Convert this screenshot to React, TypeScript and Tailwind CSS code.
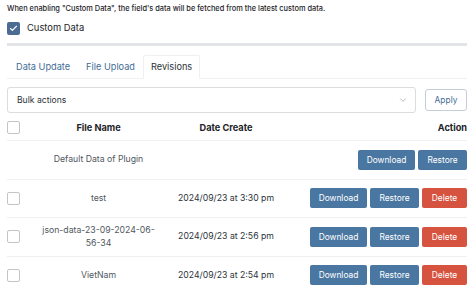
import { Check, ChevronDown } from 'lucide-react';

const rows = [
  { name: 'Default Data of Plugin', date: '', check: false, del: false },
  { name: 'test', date: '2024/09/23 at 3:30 pm', check: true, del: true },
  { name: 'json-data-23-09-2024-06-56-34', date: '2024/09/23 at 2:56 pm', check: true, del: true },
  { name: 'VietNam', date: '2024/09/23 at 2:54 pm', check: true, del: true },
];

function Box() {
  return <div className="w-[13px] h-[13px] rounded-[2px] border border-[#c3c4c7] bg-white" />;
}

export default function App() {
  return (
    <div className="w-[474px] h-[294px] overflow-hidden bg-white px-[7px] text-[#1d2327] font-['Inter',sans-serif]">
      {/* Custom data toggle */}
      <p className="pt-[4px] text-[7.4px] leading-[10px] font-medium text-[#1d2327]">
        When enabling "Custom Data", the field's data will be fetched from the latest custom data.
      </p>
      <label className="mt-[7px] flex items-center gap-[7px]">
        <span className="w-[13px] h-[13px] rounded-[2px] bg-[#4b6d93] flex items-center justify-center">
          <Check className="w-[9px] h-[9px] text-white" strokeWidth={3} />
        </span>
        <span className="text-[9.4px] text-[#1d2327]">Custom Data</span>
      </label>
      <div className="mt-[8px] h-[3px] bg-[#e2e4e7]" />

      {/* Tabs */}
      <div className="mt-[9px] flex items-end border-b border-[#eef0f2] pl-[1px]">
        <div className="px-[8px] h-[23px] flex items-center text-[9.2px] text-[#3f6c96]">Data Update</div>
        <div className="px-[8px] h-[23px] flex items-center text-[9.2px] text-[#3f6c96]">File Upload</div>
        <div className="px-[7px] h-[24px] -mb-px flex items-center text-[9.2px] text-[#2c3338] border border-b-white border-[#eef0f2] bg-white rounded-t-[2px]">
          Revisions
        </div>
      </div>

      {/* Bulk actions */}
      <div className="mt-[8px] flex items-center gap-[9px]">
        <div className="flex-1 h-[26px] border border-[#dcdcde] rounded-[3px] flex items-center justify-between pl-[9px] pr-[7px]">
          <span className="text-[8.6px] text-[#2c3338]">Bulk actions</span>
          <ChevronDown className="w-[10px] h-[10px] text-[#8c8f94]" strokeWidth={1.5} />
        </div>
        <button className="w-[42px] h-[22px] border border-[#c5cdd6] rounded-[3px] text-[8.4px] text-[#3f6c96] bg-white">
          Apply
        </button>
      </div>

      {/* Revisions table */}
      <div className="mt-[2px]">
        <div className="grid grid-cols-[30px_123px_132px_1fr] items-center h-[26px] border-b border-[#f0f0f1] text-[9.2px] font-bold text-[#1d2327]">
          <Box />
          <div className="text-center">File Name</div>
          <div className="text-center">Date Create</div>
          <div className="text-right">Action</div>
        </div>
        {rows.map((r, i) => (
          <div
            key={i}
            className="grid grid-cols-[30px_123px_132px_1fr] items-center h-[38.5px] border-b border-[#f0f0f1] text-[8.7px] text-[#50575e]"
          >
            <div>{r.check && <Box />}</div>
            <div className="text-center leading-[13px] px-[2px]">{r.name}</div>
            <div className="text-center text-[#2c3338]">{r.date}</div>
            <div className="flex justify-end gap-[3px]">
              <button className="w-[57px] h-[20px] rounded-[2px] bg-[#4a77a2] text-white text-[8.4px]">Download</button>
              <button className="w-[49px] h-[20px] rounded-[2px] bg-[#4a77a2] text-white text-[8.4px]">Restore</button>
              {r.del && (
                <button className="w-[45px] h-[20px] rounded-[2px] bg-[#d5533f] text-white text-[8.4px]">Delete</button>
              )}
            </div>
          </div>
        ))}
      </div>
    </div>
  );
}
